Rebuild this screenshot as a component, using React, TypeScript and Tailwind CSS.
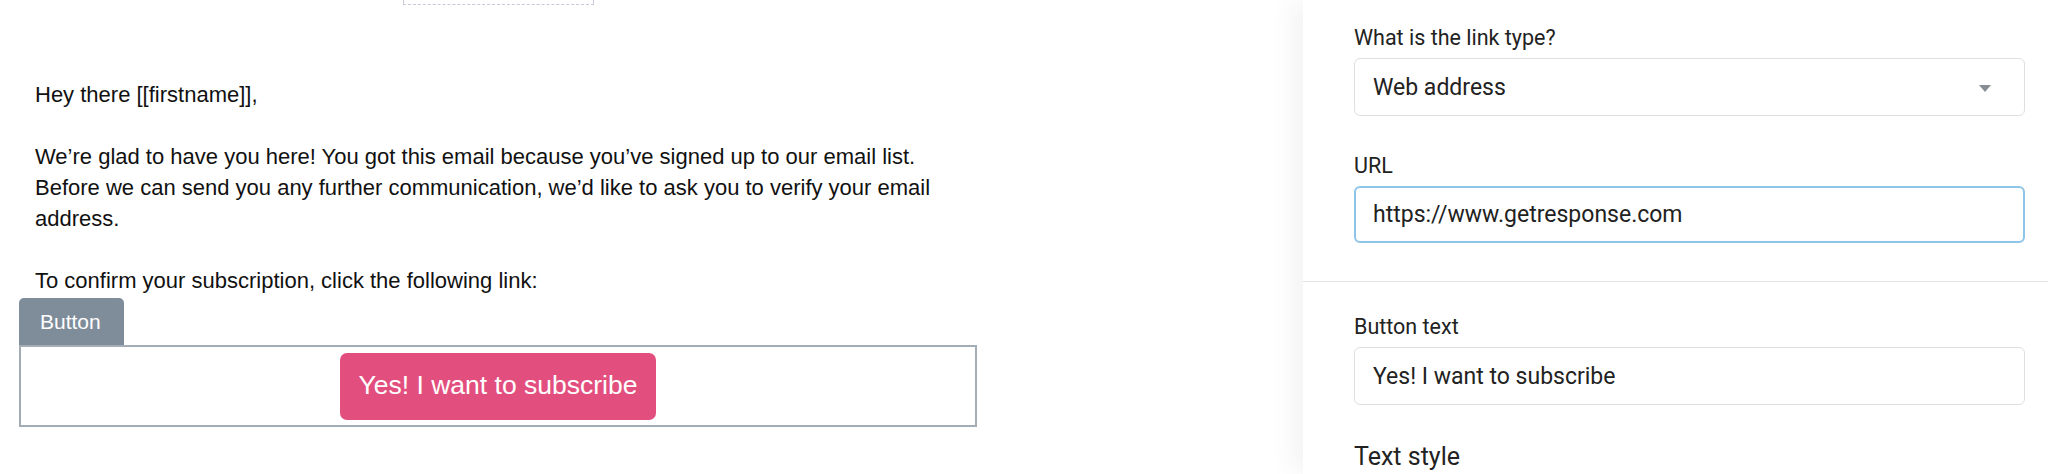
export default function App() {
  return (
    <div className="flex w-[2048px] h-[474px] overflow-hidden bg-white">
      {/* Left: email canvas */}
      <div className="flex-1 min-w-0 pl-[19px]">
        <div className="ml-[384px] h-[5px] w-[191px] border border-t-0 border-dashed border-[#c9c9db]" />
        <div className="pl-[16px] pt-[74px] font-['Liberation_Sans',Arial,sans-serif] text-[22px] leading-[31px] text-[#111111]">
          <p>Hey there [[firstname]],</p>
          <p className="mt-[31px]">
            We’re glad to have you here! You got this email because you’ve signed up to our email list.
            <br />
            Before we can send you any further communication, we’d like to ask you to verify your email
            <br />
            address.
          </p>
          <p className="mt-[31px]">To confirm your subscription, click the following link:</p>
        </div>

        <div className="mt-[2px] flex h-[47px] w-[105px] items-center rounded-t-[5px] bg-[#7f8d9b] pl-[21px] font-['Liberation_Sans',Arial,sans-serif] text-[21px] text-white">
          Button
        </div>
        <div className="flex h-[82px] w-[958px] items-center justify-center border-2 border-[#a3adb6]">
          <div className="flex h-[67px] items-center rounded-[7px] bg-[#e24f7e] px-[19px] font-['Liberation_Sans',Arial,sans-serif] text-[26.5px] text-white">
            Yes! I want to subscribe
          </div>
        </div>
      </div>

      {/* Right: settings panel */}
      <div className="w-[745px] shrink-0 bg-white shadow-[-10px_0_26px_rgba(0,0,0,0.05)] font-['Roboto',sans-serif] text-[#222222]">
        <div className="border-b border-[#e3e3e3] pl-[51px] pr-[23px] pt-[25px] pb-[38px]">
          <div className="text-[21.5px] leading-[25px]">What is the link type?</div>
          <div className="mt-[8px] flex h-[58px] items-center justify-between rounded-[6px] border border-[#dfdfdf] pl-[18px] pr-[33px] pt-[2px] text-[23px]">
            <span>Web address</span>
            <svg width="12" height="7" viewBox="0 0 12 7">
              <path d="M0 0h12L6 7z" fill="#878d93" />
            </svg>
          </div>

          <div className="mt-[37px] text-[21.5px] leading-[25px]">URL</div>
          <div className="mt-[8px] flex h-[57px] items-center rounded-[6px] border-2 border-[#8ec4e8] pl-[17px] pt-[2px] text-[23px]">
            https://www.getresponse.com
          </div>
        </div>

        <div className="pl-[51px] pr-[23px] pt-[32px]">
          <div className="text-[21.5px] leading-[25px]">Button text</div>
          <div className="mt-[8px] flex h-[58px] items-center rounded-[6px] border border-[#dfdfdf] pl-[18px] pt-[2px] text-[23px]">
            Yes! I want to subscribe
          </div>
          <div className="mt-[37px] text-[25px] leading-[30px]">Text style</div>
        </div>
      </div>
    </div>
  );
}
